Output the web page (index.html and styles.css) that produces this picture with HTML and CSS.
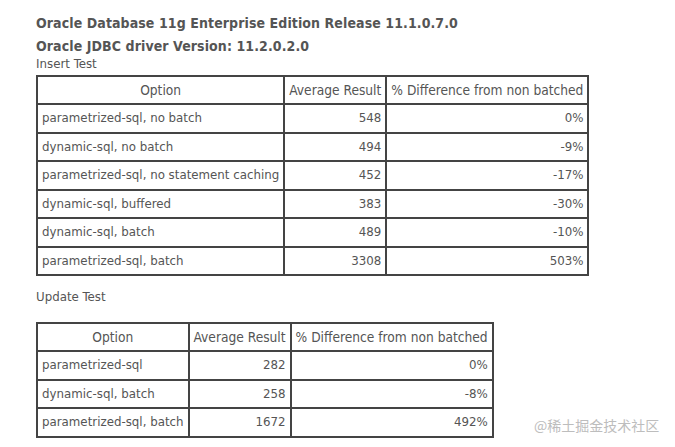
FILE: index.html
```html
<!DOCTYPE html>
<html>
<head>
<meta charset="utf-8">
<link rel="stylesheet" href="styles.css">
</head>
<body>
<div class="page">
  <div class="title">Oracle Database 11g Enterprise Edition Release 11.1.0.7.0</div>
  <div class="title">Oracle JDBC driver Version: 11.2.0.2.0</div>
  <div class="caption first">Insert Test</div>
  <table class="results">
    <tr><th>Option</th><th>Average Result</th><th>% Difference from non batched</th></tr>
    <tr><td>parametrized-sql, no batch</td><td class="num">548</td><td class="num">0%</td></tr>
    <tr><td>dynamic-sql, no batch</td><td class="num">494</td><td class="num">-9%</td></tr>
    <tr><td>parametrized-sql, no statement caching</td><td class="num">452</td><td class="num">-17%</td></tr>
    <tr><td>dynamic-sql, buffered</td><td class="num">383</td><td class="num">-30%</td></tr>
    <tr><td>dynamic-sql, batch</td><td class="num">489</td><td class="num">-10%</td></tr>
    <tr><td>parametrized-sql, batch</td><td class="num">3308</td><td class="num">503%</td></tr>
  </table>
  <div class="caption second">Update Test</div>
  <table class="results">
    <tr><th>Option</th><th>Average Result</th><th>% Difference from non batched</th></tr>
    <tr><td>parametrized-sql</td><td class="num">282</td><td class="num">0%</td></tr>
    <tr><td>dynamic-sql, batch</td><td class="num">258</td><td class="num">-8%</td></tr>
    <tr><td>parametrized-sql, batch</td><td class="num">1672</td><td class="num">492%</td></tr>
  </table>
  <div class="watermark">@稀土掘金技术社区</div>
</div>
</body>
</html>
```
FILE: styles.css
```css
html, body {
  margin: 0;
  padding: 0;
  background: #ffffff;
}
.page {
  position: relative;
  width: 675px;
  height: 447px;
  padding: 12px 0 0 36px;
  box-sizing: border-box;
  font-family: "DejaVu Sans Condensed", "DejaVu Sans", sans-serif;
  font-size: 13.15px;
  color: #555555;
}
.title {
  font-size: 14px;
  letter-spacing: 0.09px;
  font-weight: bold;
  line-height: 23px;
  color: #555555;
}
.caption {
  line-height: 12px;
}
.caption.second {
  margin-top: 14px;
  line-height: 14px;
}
.results {
  border-collapse: collapse;
  border: 2px solid #444444;
  margin-top: 5px;
}
.caption.second + .results {
  margin-top: 18px;
}
.results th,
.results td {
  border: 2px solid #444444;
  padding: 5px 4px;
  line-height: 16.5px;
  white-space: nowrap;
  text-align: left;
}
.results th {
  font-weight: normal;
  font-size: 13.65px;
  text-align: center;
  line-height: 16px;
}
.results td.num {
  text-align: right;
}
.watermark {
  position: absolute;
  left: 534px;
  top: 415px;
  font-family: "Noto Sans CJK SC", sans-serif;
  font-size: 14px;
  line-height: 20px;
  color: #bdbdbd;
}
```
